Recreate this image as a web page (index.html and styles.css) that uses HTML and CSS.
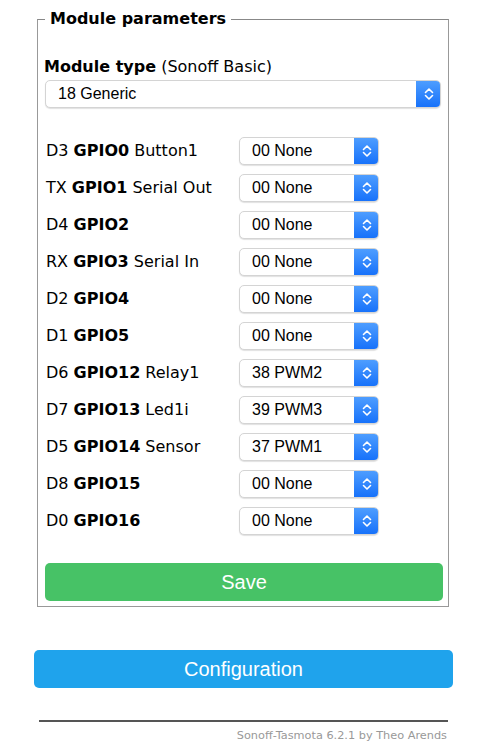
FILE: index.html
```html
<!DOCTYPE html>
<html lang="en">
<head>
    <meta charset="UTF-8">
    <title>Sonoff - Configure Module</title>
    <meta name="viewport" content="width=device-width, initial-scale=1.0">
    <link rel="stylesheet" href="styles.css">
</head>
<body>
    <div class="page">
        <fieldset class="params">
            <legend>Module parameters</legend>
            <div class="module-label"><b>Module type</b> (Sonoff Basic)</div>
            <div class="sel sel-wide">
                <span class="sel-text">18 Generic</span>
                <span class="sel-arrow"><svg width="12" height="16" viewBox="0 0 12 16"><path d="M2.5 6.5 L6 3 L9.5 6.5 M2.5 9.5 L6 13 L9.5 9.5" fill="none" stroke="#fff" stroke-width="1.6" stroke-linecap="round" stroke-linejoin="round"/></svg></span>
            </div>

            <div class="gpio-list" id="gpioList"></div>

            <button class="btn btn-save">Save</button>
        </fieldset>

        <button class="btn btn-config">Configuration</button>

        <hr class="rule">
        <div class="footer">Sonoff-Tasmota 6.2.1 by Theo Arends</div>
    </div>

    <script>
        const pins = [
            ['D3', 'GPIO0', 'Button1', '00 None'],
            ['TX', 'GPIO1', 'Serial Out', '00 None'],
            ['D4', 'GPIO2', '', '00 None'],
            ['RX', 'GPIO3', 'Serial In', '00 None'],
            ['D2', 'GPIO4', '', '00 None'],
            ['D1', 'GPIO5', '', '00 None'],
            ['D6', 'GPIO12', 'Relay1', '38 PWM2'],
            ['D7', 'GPIO13', 'Led1i', '39 PWM3'],
            ['D5', 'GPIO14', 'Sensor', '37 PWM1'],
            ['D8', 'GPIO15', '', '00 None'],
            ['D0', 'GPIO16', '', '00 None']
        ];
        const arrow = document.querySelector('.sel-arrow').innerHTML;
        const list = document.getElementById('gpioList');

        pins.forEach(p => {
            const label = document.createElement('div');
            label.className = 'gpio-label';
            label.innerHTML = p[0] + ' <b>' + p[1] + '</b>' + (p[2] ? ' ' + p[2] : '');
            const sel = document.createElement('div');
            sel.className = 'sel sel-gpio';
            sel.innerHTML = '<span class="sel-text">' + p[3] + '</span><span class="sel-arrow">' + arrow + '</span>';
            list.appendChild(label);
            list.appendChild(sel);
        });
    </script>
</body>
</html>
```

FILE: styles.css
```css
body {
    margin: 0;
    font-family: "DejaVu Sans", Verdana, sans-serif;
    font-size: 16px;
    color: #000;
    background: #fff;
}
.page {
    width: 419px;
    margin-left: 34px;
    padding-top: 10px;
}
.params {
    margin: 0 4px 0 3px;
    padding: 0 5px 5px 6px;
    border: 1px solid #999;
    border-top-color: #888;
}
.params legend {
    font-weight: bold;
    font-size: 16px;
    padding: 0 5px;
    margin-left: 1px;
    line-height: 18px;
}
.module-label {
    margin-top: 29px;
    line-height: 20px;
}
.sel {
    display: flex;
    height: 28px;
    box-sizing: border-box;
    border: 1px solid #d4d4d4;
    border-radius: 5px;
    background: #fff;
    box-shadow: 0 1px 1px rgba(0,0,0,0.12);
    font-family: "Liberation Sans", Arial, sans-serif;
    font-size: 16px;
    overflow: hidden;
}
.sel-wide {
    margin-top: 3px;
    margin-left: 1px;
    width: 396px;
}
.sel-text {
    flex: 1;
    line-height: 26px;
    padding-left: 12px;
}
.sel-arrow {
    width: 25px;
    display: flex;
    align-items: center;
    justify-content: center;
    background: linear-gradient(#509fff, #1570fa);
    margin: -1px -1px -1px 0;
}
.gpio-list {
    display: grid;
    grid-template-columns: 195px 140px;
    grid-auto-rows: 28px;
    row-gap: 9px;
    margin-top: 29px;
}
.gpio-label {
    line-height: 28px;
    padding-left: 2px;
    white-space: nowrap;
}
.sel-gpio {
    width: 140px;
}
.btn {
    display: block;
    width: 100%;
    border: 0;
    border-radius: 5px;
    color: #fff;
    font-family: "Liberation Sans", Arial, sans-serif;
    font-size: 20px;
    height: 38px;
    padding: 0;
    cursor: pointer;
}
.btn-save {
    background: #47c266;
    margin-top: 28px;
    margin-left: 1px;
    width: calc(100% - 1px);
}
.btn-config {
    background: #1fa3ec;
    margin-top: 43px;
}
.rule {
    margin: 32px 5px 0 5px;
    border: 0;
    border-top: 2px solid #555;
}
.footer {
    text-align: right;
    font-size: 11.3px;
    color: #999;
    padding-right: 6px;
    margin-top: 7px;
}
```
